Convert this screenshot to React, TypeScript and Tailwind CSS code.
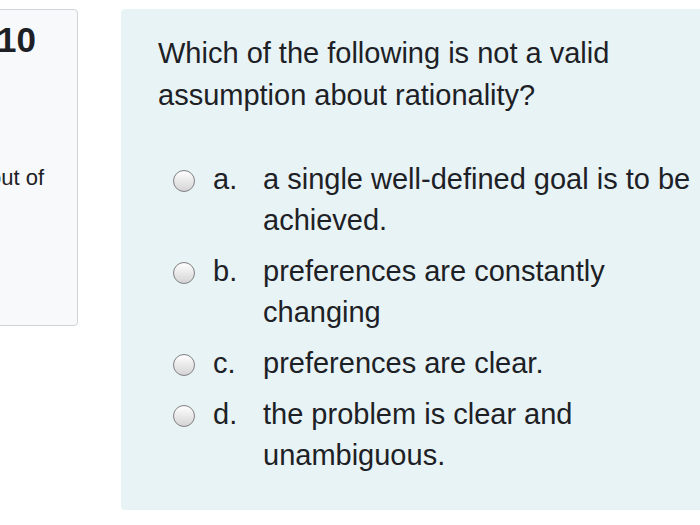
import React from 'react';

const options = [
  { key: 'a.', text: 'a single well-defined goal is to be achieved.' },
  { key: 'b.', text: 'preferences are constantly changing' },
  { key: 'c.', text: 'preferences are clear.' },
  { key: 'd.', text: 'the problem is clear and unambiguous.' },
];

export default function App() {
  return (
    <div
      className="w-[700px] h-[525px] overflow-hidden bg-white flex items-start pt-[9px] text-[#1d2125]"
      style={{ fontFamily: '"Liberation Sans", Arial, sans-serif' }}
    >
      {/* question info panel, mostly cropped off the left */}
      <div className="shrink-0 w-[200px] -ml-[122px] h-[317px] border border-[#cfd4d9] rounded-[4px] bg-[#f8f9fa] overflow-hidden flex flex-col items-end">
        <div className="pt-[10px] pr-[41px] text-[35px] leading-[40px] whitespace-nowrap">
          Question <span className="font-bold">10</span>
        </div>
        <div className="mt-[103px] pr-[33px] text-[22px] leading-[30px] whitespace-nowrap">
          Marked out of
        </div>
      </div>

      {/* question body */}
      <div className="shrink-0 ml-[43px] w-[640px] h-[501px] rounded-[4px] bg-[#e7f3f5] pl-[37px] pr-[48px] pt-[23px]">
        <div className="text-[29px] leading-[42px]">
          Which of the following is not a valid assumption about rationality?
        </div>

        <div className="mt-[43px] flex flex-col gap-[10px]">
          {options.map((o) => (
            <div key={o.key} className="flex items-start text-[29px] leading-[41px]">
              <span className="shrink-0 ml-[15px] mt-[11px] w-[22px] h-[22px] rounded-full border border-[#7f7f7f] bg-linear-to-b from-white to-[#d4d4d4]" />
              <span className="shrink-0 ml-[18px] w-[50px]">{o.key}</span>
              <span className="flex-1">{o.text}</span>
            </div>
          ))}
        </div>
      </div>
    </div>
  );
}
